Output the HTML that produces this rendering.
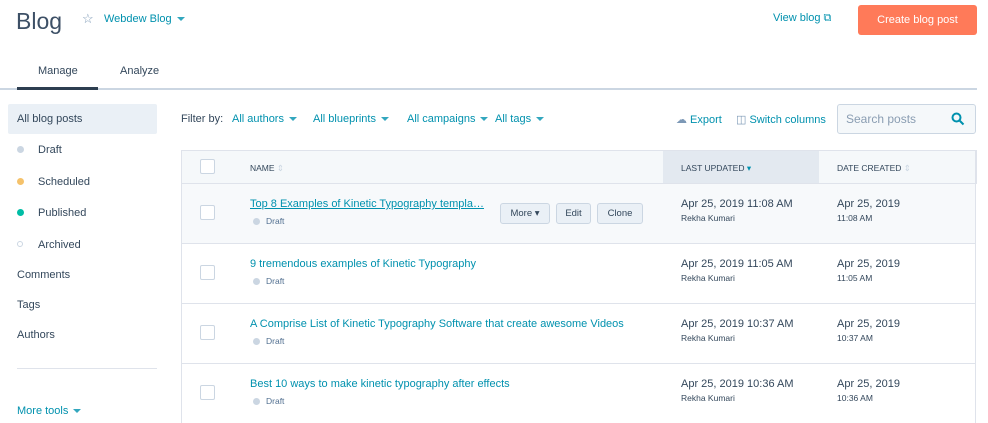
<!DOCTYPE html>
<html><head><style>
body{margin:0;width:988px;height:423px;overflow:hidden;background:#fff;font-family:"Liberation Sans",sans-serif;color:#33475b;position:relative}
.a{position:absolute;white-space:nowrap}
.l{color:#0091ae}
.c{display:inline-block;border-left:4px solid transparent;border-right:4px solid transparent;border-top:4px solid currentColor;vertical-align:middle;margin-left:5px;opacity:.8}
.dot{position:absolute;width:7px;height:7px;border-radius:50%}
.cb{position:absolute;left:200px;width:13px;height:13px;border:1.5px solid #cbd6e2;border-radius:2px;background:#fff}
.hl{position:absolute;left:181px;width:795px;height:1px;background:#dfe3eb}
.t{font-size:11px}
.s{font-size:8.5px}
.btn{position:absolute;top:203px;height:19px;border:1px solid #cbd6e2;background:#eaf0f6;border-radius:3px;font-size:9.5px;line-height:19px;text-align:center}
</style></head><body>
<div class="a" style="left:16px;top:8px;font-size:23px;color:#3d5066">Blog</div>
<div class="a" style="left:82px;top:11px;font-size:13px;color:#7c98b6">☆</div>
<div class="a l" style="left:104px;top:13px;font-size:11px">Webdew Blog<span class="c"></span></div>
<div class="a l" style="left:773px;top:12px;font-size:11px">View blog ⧉</div>
<div class="a" style="left:858px;top:5px;width:119px;height:30px;background:#ff7a59;border-radius:3px;color:#fff;font-size:11px;line-height:30px;text-align:center">Create blog post</div>
<div class="a" style="left:38px;top:65px;font-size:11px">Manage</div>
<div class="a" style="left:120px;top:65px;font-size:11px">Analyze</div>
<div class="a" style="left:0;top:88px;width:977px;height:2px;background:#cbd6e2"></div>
<div class="a" style="left:17px;top:87px;width:81px;height:3px;background:#2d3e50"></div>

<div class="a" style="left:8px;top:104px;width:149px;height:30px;background:#eaf0f6;border-radius:2px"></div>
<div class="a t" style="left:17px;top:113px">All blog posts</div>
<div class="dot" style="left:17px;top:146px;background:#cbd6e2"></div><div class="a t" style="left:38px;top:144px">Draft</div>
<div class="dot" style="left:17px;top:178px;background:#f5c26b"></div><div class="a t" style="left:38px;top:176px">Scheduled</div>
<div class="dot" style="left:17px;top:209px;background:#00bda5"></div><div class="a t" style="left:38px;top:207px">Published</div>
<div class="dot" style="left:17px;top:241px;border:1.5px solid #cbd6e2;width:4px;height:4px"></div><div class="a t" style="left:38px;top:239px">Archived</div>
<div class="a t" style="left:17px;top:269px">Comments</div>
<div class="a t" style="left:17px;top:299px">Tags</div>
<div class="a t" style="left:17px;top:329px">Authors</div>
<div class="a" style="left:17px;top:368px;width:140px;height:1px;background:#dfe3eb"></div>
<div class="a t l" style="left:17px;top:405px">More tools<span class="c"></span></div>

<div class="a t" style="left:181px;top:113px">Filter by:</div>
<div class="a t l" style="left:232px;top:113px">All authors<span class="c"></span></div>
<div class="a t l" style="left:313px;top:113px">All blueprints<span class="c"></span></div>
<div class="a t l" style="left:407px;top:113px">All campaigns<span class="c"></span></div>
<div class="a t l" style="left:495px;top:113px">All tags<span class="c"></span></div>
<div class="a t l" style="left:676px;top:113px"><span style="color:#7c98b6">☁</span> Export</div>
<div class="a t l" style="left:736px;top:113px"><span style="color:#7c98b6">◫</span> Switch columns</div>
<div class="a" style="left:837px;top:104px;width:137px;height:28px;border:1px solid #cbd6e2;border-radius:3px;background:#f5f8fa"></div>
<div class="a t" style="left:846px;top:112px;color:#8a9db2;font-size:12px">Search posts</div>
<svg class="a" style="left:951px;top:112px" width="14" height="14"><circle cx="5.5" cy="5.5" r="4" stroke="#0091ae" stroke-width="2" fill="none"/><path d="M8.5 8.5L12.5 12.5" stroke="#0091ae" stroke-width="2"/></svg>

<div class="a" style="left:181px;top:150px;width:794px;height:32px;background:#f5f8fa;border:1px solid #dfe3eb"></div>
<div class="a" style="left:663px;top:151px;width:156px;height:32px;background:#e3e9f0"></div>
<div class="a" style="left:181px;top:150px;width:1px;height:273px;background:#dfe3eb"></div>
<div class="a" style="left:975px;top:150px;width:1px;height:273px;background:#dfe3eb"></div>
<div class="a" style="left:182px;top:184px;width:793px;height:59px;background:#f7f9fb"></div>
<div class="cb" style="top:159px"></div>
<div class="a s" style="left:250px;top:163px">NAME <span style="color:#cbd6e2">⇕</span></div>
<div class="a s" style="left:681px;top:163px">LAST UPDATED <span style="color:#0091ae">▾</span></div>
<div class="a s" style="left:837px;top:163px">DATE CREATED <span style="color:#cbd6e2">⇕</span></div>
<div class="hl" style="top:183px"></div><div class="hl" style="top:243px"></div><div class="hl" style="top:303px"></div><div class="hl" style="top:363px"></div>

<div class="cb" style="top:205px"></div>
<div class="a t l" style="left:250px;top:198px;text-decoration:underline">Top 8 Examples of Kinetic Typography templa…</div>
<div class="btn" style="left:500px;width:48px">More ▾</div>
<div class="btn" style="left:556px;width:33px">Edit</div>
<div class="btn" style="left:597px;width:44px">Clone</div>

<div class="cb" style="top:265px"></div>
<div class="a t l" style="left:250px;top:258px">9 tremendous examples of Kinetic Typography</div>
<div class="cb" style="top:325px"></div>
<div class="a t l" style="left:250px;top:318px">A Comprise List of Kinetic Typography Software that create awesome Videos</div>
<div class="cb" style="top:385px"></div>
<div class="a t l" style="left:250px;top:378px">Best 10 ways to make kinetic typography after effects</div>

<div class="dot" style="left:253px;top:218px;background:#cbd6e2"></div><div class="a s" style="left:266px;top:216px;color:#516f90">Draft</div>
<div class="dot" style="left:253px;top:278px;background:#cbd6e2"></div><div class="a s" style="left:266px;top:276px;color:#516f90">Draft</div>
<div class="dot" style="left:253px;top:338px;background:#cbd6e2"></div><div class="a s" style="left:266px;top:336px;color:#516f90">Draft</div>
<div class="dot" style="left:253px;top:398px;background:#cbd6e2"></div><div class="a s" style="left:266px;top:396px;color:#516f90">Draft</div>

<div class="a t" style="left:681px;top:198px">Apr 25, 2019 11:08 AM</div><div class="a s" style="left:681px;top:213px">Rekha Kumari</div>
<div class="a t" style="left:837px;top:198px">Apr 25, 2019</div><div class="a s" style="left:837px;top:213px">11:08 AM</div>
<div class="a t" style="left:681px;top:258px">Apr 25, 2019 11:05 AM</div><div class="a s" style="left:681px;top:273px">Rekha Kumari</div>
<div class="a t" style="left:837px;top:258px">Apr 25, 2019</div><div class="a s" style="left:837px;top:273px">11:05 AM</div>
<div class="a t" style="left:681px;top:318px">Apr 25, 2019 10:37 AM</div><div class="a s" style="left:681px;top:333px">Rekha Kumari</div>
<div class="a t" style="left:837px;top:318px">Apr 25, 2019</div><div class="a s" style="left:837px;top:333px">10:37 AM</div>
<div class="a t" style="left:681px;top:378px">Apr 25, 2019 10:36 AM</div><div class="a s" style="left:681px;top:393px">Rekha Kumari</div>
<div class="a t" style="left:837px;top:378px">Apr 25, 2019</div><div class="a s" style="left:837px;top:393px">10:36 AM</div>
</body></html>
